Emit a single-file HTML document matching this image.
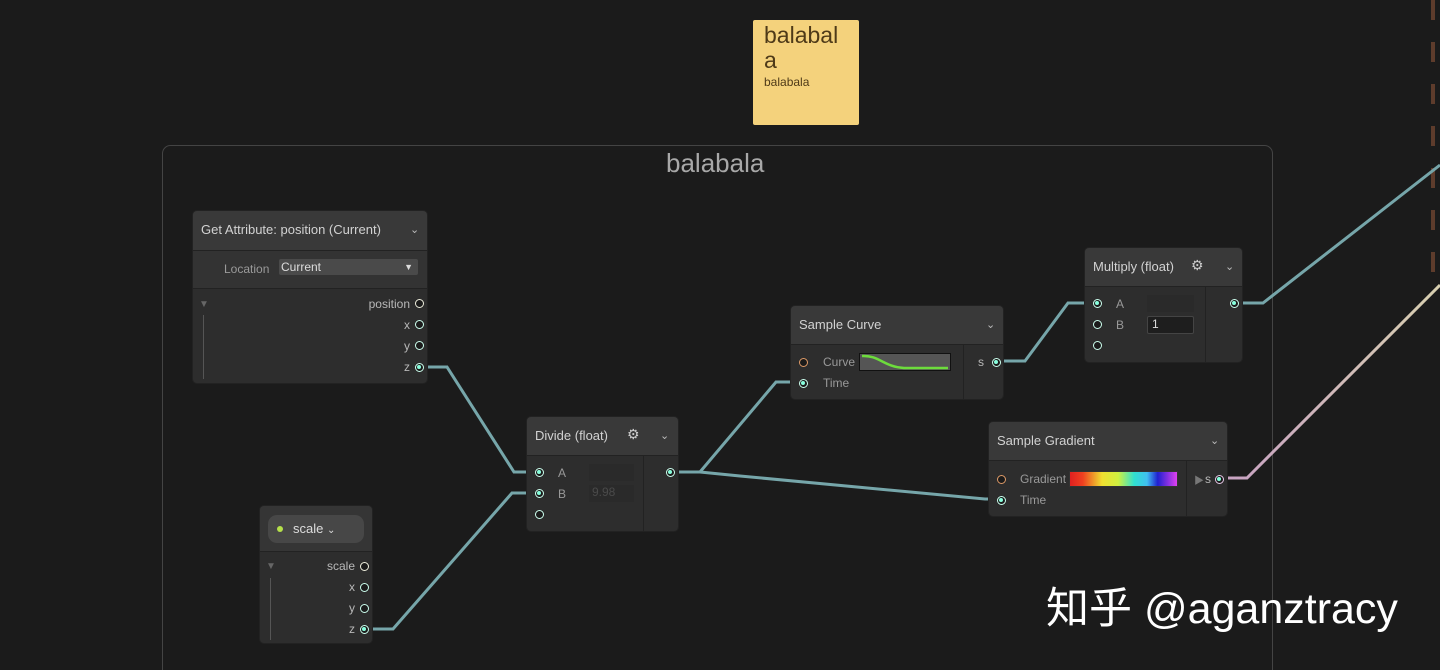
<!DOCTYPE html>
<html><head><meta charset="utf-8"><style>
*{margin:0;padding:0;box-sizing:border-box}
body{width:1440px;height:670px;background:#1b1b1b;position:relative;overflow:hidden;font-family:"Liberation Sans","Noto Sans CJK SC",sans-serif;color:#c8c8c8}
.a{position:absolute}
.node{position:absolute;background:#2d2d2d;border-radius:5px;border:1px solid #222;overflow:hidden}
.hd{position:absolute;left:0;right:0;top:0;background:#393939;border-bottom:1px solid #222;font-size:13px;color:#d2d2d2;padding-left:8px}
.t{position:absolute;font-size:12px;color:#b8b8b8}
.p{position:absolute;width:9px;height:9px;border-radius:50%;border:1.5px solid #cfe;background:#1b1b1b}
.p.on::after{content:"";position:absolute;left:1px;top:1px;width:4px;height:4px;border-radius:50%;background:#8fd}
.chev{position:absolute;font-size:11px;color:#bbb}
.gear{position:absolute;font-size:14px;color:#ccc}
</style></head><body>
<svg class="a" style="left:0;top:0" width="1440" height="670">
<rect x="162.5" y="145.5" width="1110" height="540" rx="8" fill="none" stroke="#444"/>
<line x1="1433" y1="0" x2="1433" y2="275" stroke="#5e3c2c" stroke-width="4" stroke-dasharray="20,22"/>
<g fill="none" stroke="#76a6aa" stroke-width="3">
<polyline points="424,367 447,367 514,472 534,472"/>
<polyline points="369,629 393,629 512,493 534,493"/>
<polyline points="675,472 700,472 776,382 798,382"/>
<polyline points="700,472 740,476 985,499 996,499"/>
<polyline points="1001,361 1025,361 1068,303 1092,303"/>
<polyline points="1239,303 1263,303 1440,165"/>
</g>
<defs><linearGradient id="g" x1="0" y1="1" x2="1" y2="0"><stop offset="0" stop-color="#c8a3c2"/><stop offset="1" stop-color="#d8d0b0"/></linearGradient></defs>
<polyline points="1224,478 1247,478 1440,285" fill="none" stroke="url(#g)" stroke-width="3"/>
</svg>
<div class="a" style="left:666px;top:148px;font-size:26px;color:#a8a8a8">balabala</div>
<div class="a" style="left:753px;top:20px;width:106px;height:105px;background:#f4d27c;border-radius:2px;padding:3px 11px;color:#4e3a18">
<div style="font-size:23px;line-height:25px">balabal<br>a</div><div style="font-size:12px;margin-top:2px">balabala</div></div>

<!-- Get Attribute -->
<div class="node" style="left:192px;top:210px;width:236px;height:174px">
<div class="hd" style="height:40px;line-height:38px">Get Attribute: position (Current)</div>
<div class="chev" style="left:217px;top:12px">⌄</div>
<div class="a" style="left:0;right:0;top:40px;height:38px;background:#333;border-bottom:1px solid #222"></div>
<div class="t" style="left:31px;top:51px;color:#9a9a9a">Location</div>
<div class="a" style="left:86px;top:48px;width:139px;height:16px;background:#4a4a4a;border-radius:2px;font-size:12px;color:#ddd;padding-left:2px;line-height:16px">Current<span style="position:absolute;right:5px;font-size:9px">▼</span></div>
<div class="a" style="left:6px;top:88px;font-size:10px;color:#666">▼</div>
<div class="a" style="left:10px;top:104px;width:1px;height:64px;background:#555"></div>
<div class="t" style="right:17px;top:86px">position</div><div class="p" style="left:222px;top:88px;border-color:#eed"></div>
<div class="t" style="right:17px;top:107px">x</div><div class="p" style="left:222px;top:109px"></div>
<div class="t" style="right:17px;top:128px">y</div><div class="p" style="left:222px;top:130px"></div>
<div class="t" style="right:17px;top:149px">z</div><div class="p on" style="left:222px;top:152px"></div>
</div>

<!-- Divide -->
<div class="node" style="left:526px;top:416px;width:153px;height:116px">
<div class="hd" style="height:39px;line-height:38px">Divide (float)</div>
<div class="gear" style="left:100px;top:9px">⚙</div><div class="chev" style="left:133px;top:12px">⌄</div>
<div class="a" style="left:116px;top:39px;width:1px;bottom:0;background:#222"></div>
<div class="p on" style="left:8px;top:51px"></div><div class="t" style="left:31px;top:49px;color:#999">A</div><div class="a" style="left:62px;top:47px;width:45px;height:17px;background:#2a2a2a"></div>
<div class="p on" style="left:8px;top:72px"></div><div class="t" style="left:31px;top:70px;color:#999">B</div><div class="a" style="left:62px;top:68px;width:45px;height:17px;background:#2a2a2a;font-size:12px;color:#4a4a4a;padding-left:3px">9.98</div>
<div class="p" style="left:8px;top:93px"></div>
<div class="p on" style="left:139px;top:51px"></div>
</div>

<!-- scale -->
<div class="node" style="left:259px;top:505px;width:114px;height:139px">
<div class="a" style="left:0;right:0;top:0;height:46px;background:#353535;border-bottom:1px solid #222"></div>
<div class="a" style="left:8px;top:9px;width:96px;height:28px;background:#474747;border-radius:9px;font-size:13px;color:#ddd;line-height:28px;padding-left:25px">scale <span style="font-size:10px">⌄</span></div>
<div class="a" style="left:17px;top:20px;width:6px;height:6px;border-radius:50%;background:#b5e04a"></div>
<div class="a" style="left:6px;top:55px;font-size:10px;color:#666">▼</div>
<div class="a" style="left:10px;top:72px;width:1px;height:62px;background:#555"></div>
<div class="t" style="right:17px;top:53px">scale</div><div class="p" style="left:100px;top:56px;border-color:#eed"></div>
<div class="t" style="right:17px;top:74px">x</div><div class="p" style="left:100px;top:77px"></div>
<div class="t" style="right:17px;top:95px">y</div><div class="p" style="left:100px;top:98px"></div>
<div class="t" style="right:17px;top:116px">z</div><div class="p on" style="left:100px;top:119px"></div>
</div>

<!-- Sample Curve -->
<div class="node" style="left:790px;top:305px;width:214px;height:95px">
<div class="hd" style="height:39px;line-height:37px">Sample Curve</div>
<div class="chev" style="left:195px;top:12px">⌄</div>
<div class="a" style="left:172px;top:39px;width:1px;bottom:0;background:#222"></div>
<div class="p" style="left:8px;top:52px;border-color:#d96"></div><div class="t" style="left:32px;top:49px;color:#999">Curve</div>
<svg class="a" style="left:68px;top:47px" width="92" height="18"><rect x="0.5" y="0.5" width="91" height="17" fill="#555" stroke="#111"/><path d="M3 3 C20 2,25 14,45 15 L89 15" stroke="#6ddc3c" stroke-width="2.5" fill="none"/></svg>
<div class="p on" style="left:8px;top:73px"></div><div class="t" style="left:32px;top:70px;color:#999">Time</div>
<div class="t" style="left:187px;top:49px">s</div><div class="p on" style="left:201px;top:52px"></div>
</div>

<!-- Multiply -->
<div class="node" style="left:1084px;top:247px;width:159px;height:116px">
<div class="hd" style="height:39px;line-height:37px">Multiply (float)</div>
<div class="gear" style="left:106px;top:9px">⚙</div><div class="chev" style="left:140px;top:12px">⌄</div>
<div class="a" style="left:120px;top:39px;width:1px;bottom:0;background:#222"></div>
<div class="p on" style="left:8px;top:51px"></div><div class="t" style="left:31px;top:49px;color:#999">A</div><div class="a" style="left:62px;top:47px;width:47px;height:17px;background:#2a2a2a"></div>
<div class="p" style="left:8px;top:72px"></div><div class="t" style="left:31px;top:70px;color:#999">B</div><div class="a" style="left:62px;top:68px;width:47px;height:18px;background:#1e1e1e;border:1px solid #444;border-radius:2px;font-size:12px;color:#ddd;padding-left:4px">1</div>
<div class="p" style="left:8px;top:93px"></div>
<div class="p on" style="left:145px;top:51px"></div>
</div>

<!-- Sample Gradient -->
<div class="node" style="left:988px;top:421px;width:240px;height:96px">
<div class="hd" style="height:39px;line-height:37px">Sample Gradient</div>
<div class="chev" style="left:221px;top:12px">⌄</div>
<div class="a" style="left:197px;top:39px;width:1px;bottom:0;background:#222"></div>
<div class="p" style="left:8px;top:53px;border-color:#d96"></div><div class="t" style="left:31px;top:50px;color:#999">Gradient</div>
<div class="a" style="left:80px;top:49px;width:109px;height:16px;border:1px solid #333;background:linear-gradient(90deg,#e02020,#f04020 12%,#f0e030 30%,#d0f040 45%,#30e0d0 60%,#40c0f0 72%,#2020d0 82%,#e040f0 100%)"></div>
<div class="p on" style="left:8px;top:74px"></div><div class="t" style="left:31px;top:71px;color:#999">Time</div>
<div class="t" style="left:205px;top:50px;color:#777;font-size:10px">▶</div><div class="t" style="left:216px;top:50px">s</div>
<div class="p on" style="left:226px;top:53px;border-color:#e8c8e8"></div>
</div>

<div class="a" style="left:1046px;top:574px;font-size:43px;color:#fff;white-space:nowrap">知乎 @aganztracy</div>
</body></html>
